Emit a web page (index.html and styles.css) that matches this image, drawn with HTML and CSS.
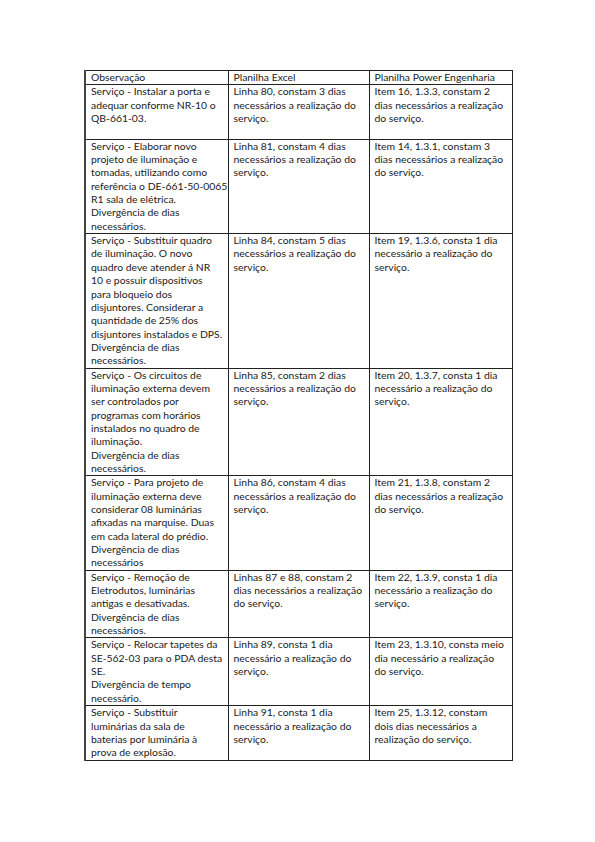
FILE: index.html
```html
<!DOCTYPE html>
<html lang="pt">
<head>
<meta charset="utf-8">
<link rel="stylesheet" href="styles.css">
</head>
<body>
<div class="page">
<table class="grid">
<colgroup><col class="c1"><col class="c2"><col class="c3"></colgroup>
<tr class="head"><td>Observação</td><td>Planilha Excel</td><td>Planilha Power Engenharia</td></tr>
<tr class="r1"><td>Serviço - Instalar a porta e<br>adequar conforme NR-10 o<br>QB-661-03.</td><td>Linha 80, constam 3 dias<br>necessários a realização do<br>serviço.</td><td>Item 16, 1.3.3, constam 2<br>dias necessários a realização<br>do serviço.</td></tr>
<tr><td>Serviço - Elaborar novo<br>projeto de iluminação e<br>tomadas, utilizando como<br>referência o DE-661-50-0065<br>R1 sala de elétrica.<br>Divergência de dias<br>necessários.</td><td>Linha 81, constam 4 dias<br>necessários a realização do<br>serviço.</td><td>Item 14, 1.3.1, constam 3<br>dias necessários a realização<br>do serviço.</td></tr>
<tr><td>Serviço - Substituir quadro<br>de iluminação. O novo<br>quadro deve atender á NR<br>10 e possuir dispositivos<br>para bloqueio dos<br>disjuntores. Considerar a<br>quantidade de 25% dos<br>disjuntores instalados e DPS.<br>Divergência de dias<br>necessários.</td><td>Linha 84, constam 5 dias<br>necessários a realização do<br>serviço.</td><td>Item 19, 1.3.6, consta 1 dia<br>necessário a realização do<br>serviço.</td></tr>
<tr><td>Serviço - Os circuitos de<br>iluminação externa devem<br>ser controlados por<br>programas com horários<br>instalados no quadro de<br>iluminação.<br>Divergência de dias<br>necessários.</td><td>Linha 85, constam 2 dias<br>necessários a realização do<br>serviço.</td><td>Item 20, 1.3.7, consta 1 dia<br>necessário a realização do<br>serviço.</td></tr>
<tr><td>Serviço - Para projeto de<br>iluminação externa deve<br>considerar 08 luminárias<br>afixadas na marquise. Duas<br>em cada lateral do prédio.<br>Divergência de dias<br>necessários</td><td>Linha 86, constam 4 dias<br>necessários a realização do<br>serviço.</td><td>Item 21, 1.3.8, constam 2<br>dias necessários a realização<br>do serviço.</td></tr>
<tr><td>Serviço - Remoção de<br>Eletrodutos, luminárias<br>antigas e desativadas.<br>Divergência de dias<br>necessários.</td><td>Linhas 87 e 88, constam 2<br>dias necessários a realização<br>do serviço.</td><td>Item 22, 1.3.9, consta 1 dia<br>necessário a realização do<br>serviço.</td></tr>
<tr><td>Serviço - Relocar tapetes da<br>SE-562-03 para o PDA desta<br>SE.<br>Divergência de tempo<br>necessário.</td><td>Linha 89, consta 1 dia<br>necessário a realização do<br>serviço.</td><td>Item 23, 1.3.10, consta meio<br>dia necessário a realização<br>do serviço.</td></tr>
<tr><td>Serviço - Substituir<br>luminárias da sala de<br>baterias por luminária à<br>prova de explosão.</td><td>Linha 91, consta 1 dia<br>necessário a realização do<br>serviço.</td><td>Item 25, 1.3.12, constam<br>dois dias necessários a<br>realização do serviço.</td></tr>
</table>
</div>
</body>
</html>
```
FILE: styles.css
```css
html, body {
  margin: 0;
  padding: 0;
  background: #fff;
}
.page {
  width: 595px;
  height: 842px;
  padding: 70px 0 0 84px;
  box-sizing: border-box;
}
.grid {
  border-collapse: collapse;
  table-layout: fixed;
  width: 427px;
  font-family: Lato, "Liberation Sans", sans-serif;
  font-size: 10.4px;
  line-height: 13.35px;
  color: #1a1a1a;
}
.c1 { width: 143px; }
.c2 { width: 141px; }
.c3 { width: 143px; }
.grid td {
  border: 1px solid #222;
  padding: 0 0 0 5px;
  vertical-align: top;
  white-space: nowrap;
  overflow: hidden;
}
.grid tr td:first-child {
  border-left: 2px solid #444;
}
.r1 td {
  padding-bottom: 13.35px;
}
```
